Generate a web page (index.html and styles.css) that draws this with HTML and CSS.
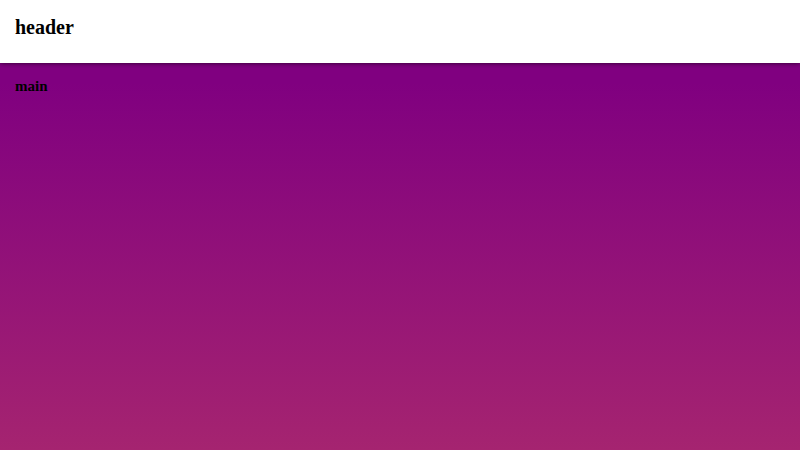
FILE: index.html
```
<!DOCTYPE html>
<html lang="en">
<head>
    <meta charset="UTF-8">
    <meta name="viewport" content="width=device-width, initial-scale=1.0">
    <title>Document</title>
    <link rel="stylesheet" href="styles.css">
</head>
<body>
    <header class="header">
        <h1 class="title">header</h1>
    </header>
    <main class="main">
        <h2 class="subtitle">main</h2>
    </main>
</body>
</html>
```

FILE: styles.css
```
*{
    margin: 0;
    padding: 0;
    box-sizing: border-box;
}
body{
    display: flex;
    flex-direction: column;
    min-height: 100vh;
    font-family: "Liberation Serif", "Times New Roman", serif;
    color: black;
}
.header{
    padding: 15px 15px 24px;
    background-color: white;
    box-shadow: 0 0 5px rgba(0, 0, 0, 0.7);
    z-index: 1;
}
.title{
    font-size: 20px;
    line-height: 24px;
}
.main{
    flex: 1;
    padding: 15px;
    background-image: linear-gradient(purple 5%, #a52470);
}
.subtitle{
    font-size: 15px;
    line-height: 17px;
}
```
